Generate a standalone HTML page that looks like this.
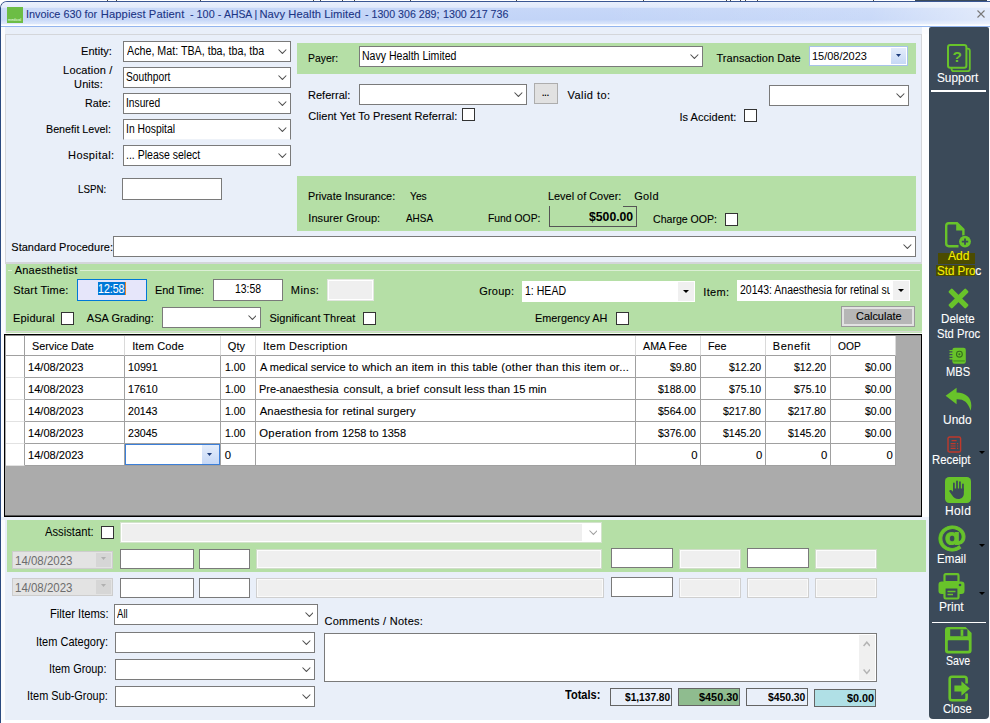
<!DOCTYPE html>
<html lang="en">
<head>
<meta charset="utf-8">
<title>Invoice 630 for Happiest Patient</title>
<style>
html,body{margin:0;padding:0}
body{width:990px;height:723px;overflow:hidden;background:#fff;font-family:"Liberation Sans",sans-serif;font-size:11px;color:#000}
#win{position:relative;width:990px;height:723px;overflow:hidden;background:#fff}
#win div,#win span.t,#win svg{position:absolute}
#win div{box-sizing:border-box}
.t{white-space:pre;transform-origin:0 50%;-webkit-text-stroke:0.1px}
.frame{background:#fbfcfe;border-left:1px solid #2a4a80;border-top:1px solid #3a5793;border-radius:7px 0 0 0}
.title{background:linear-gradient(to right,rgba(255,255,255,.12) 0,rgba(255,255,255,0) 35%,rgba(255,255,255,0) 60%,rgba(255,255,255,.12) 88%,rgba(255,255,255,.5) 100%),linear-gradient(#e8effc 0,#e1eafb 22%,#c6d7f8 26%,#c2d4f7 74%,#d3e1fa 84%,#d9e5fb 91%,#fbfdff 95%,#fff 100%);border-bottom:1px solid #93b5ee;border-radius:6px 0 0 0}
.panel{background:#e9eff9}
.pborder{border:1px solid #d4d6da;border-bottom:none}
.green{background:#b5dfa6}
.side{background:#3b4a59;border-radius:2px 2px 4px 4px}
.combo{background:#fff;border:1px solid #7a7a7a}
.cdis{background:#efefef;border:1px solid #d3e3cc;box-shadow:inset 0 0 0 1px #fff}
.flat{background:#fff}
.chk{background:#fff;border:1px solid #333}
.tb{background:#fff;border:1px solid #7a7a7a}
.tbd{background:#efefef;border:1px solid #d0dcc9;box-shadow:inset 0 0 0 1px #fcfcfc}
.tbd2{background:#efefef;border:1px solid #cfcfcf;box-shadow:inset 0 0 0 1px #fafafa}
.dd{background:#e3e3e3;border:1px solid #cdcdcd}
.dp{background:#fff;border:1px solid #a9c3ea}
.dpb{background:linear-gradient(#e4edfb,#c6d8f6)}
.btn{background:#e1e1e1;border:1px solid #adadad}
.grid{background:#ababab;border:1px solid #000}
.gh{background:#fff;border-right:1px solid #dadada;border-bottom:1px solid #a0a0a0}
.gc{background:#fff;border-right:1px solid #a0a0a0;border-bottom:1px solid #a0a0a0}
.sel{background:#0078d7}
.hl{background:#4b4b00}
.ln{background:#fff}
.tot{border:1px solid #646464;background:#f0f0f0}
.nb{border-bottom-color:#eef2f8}
.n{-webkit-text-stroke:0}

</style>
</head>
<body>
<div id="win">
<div style="left:0px;top:0px;width:990px;height:3px;background:#fff"></div>
<div style="left:107px;top:0px;width:1px;height:1px;background:#4a4a4a"></div>
<div style="left:116px;top:0px;width:1px;height:1px;background:#4a4a4a"></div>
<div style="left:200px;top:0px;width:1px;height:1px;background:#4a4a4a"></div>
<div style="left:313px;top:0px;width:1px;height:1px;background:#4a4a4a"></div>
<div style="left:320px;top:0px;width:1px;height:1px;background:#4a4a4a"></div>
<div style="left:342px;top:0px;width:1px;height:1px;background:#4a4a4a"></div>
<div style="left:354px;top:0px;width:1px;height:1px;background:#4a4a4a"></div>
<div style="left:410px;top:0px;width:1px;height:1px;background:#4a4a4a"></div>
<div style="left:516px;top:0px;width:1px;height:1px;background:#4a4a4a"></div>
<div style="left:643px;top:0px;width:1px;height:1px;background:#4a4a4a"></div>
<div style="left:726px;top:0px;width:1px;height:1px;background:#4a4a4a"></div>
<div style="left:730px;top:0px;width:1px;height:1px;background:#4a4a4a"></div>
<div style="left:740px;top:0px;width:1px;height:1px;background:#4a4a4a"></div>
<div style="left:745px;top:0px;width:1px;height:1px;background:#4a4a4a"></div>
<div style="left:757px;top:0px;width:1px;height:1px;background:#4a4a4a"></div>
<div style="left:873px;top:0px;width:1px;height:1px;background:#4a4a4a"></div>
<div style="left:915px;top:0px;width:72px;height:1px;background:#3b4a59"></div>
<div class="frame" style="left:0px;top:1px;width:990px;height:719px;"></div>
<div class="title" style="left:1px;top:2px;width:989px;height:25px;"></div>
<div style="left:7px;top:7px;width:16px;height:16px;background:#6cbd45"></div>
<span class="t" style="left:8.45px;top:16.21px;font-size:4px;line-height:8px;transform:scaleX(0.9578);color:#d8f0c8;">medical</span>
<span class="t" style="left:25.52px;top:6.92px;font-size:11.2px;line-height:15px;transform:scaleX(0.9696);color:#1b3585;">Invoice 630 for </span>
<span class="t" style="left:100.8px;top:6.92px;font-size:11.2px;line-height:15px;letter-spacing:0.09px;color:#1b3585;">Happiest Patient </span>
<span class="t" style="left:189.61px;top:6.92px;font-size:11.2px;line-height:15px;transform:scaleX(0.9662);color:#1b3585;">- 100 - </span>
<span class="t" style="left:223.7px;top:6.92px;font-size:11.2px;line-height:15px;transform:scaleX(0.9258);color:#1b3585;">AHSA | </span>
<span class="t" style="left:259.4px;top:6.92px;font-size:11.2px;line-height:15px;letter-spacing:0.07px;color:#1b3585;">Navy Health Limited </span>
<span class="t" style="left:365.22px;top:6.92px;font-size:11.2px;line-height:15px;transform:scaleX(0.9494);color:#1b3585;">- 1300 306 289; </span>
<span class="t" style="left:442.6px;top:6.92px;font-size:11.2px;line-height:15px;transform:scaleX(0.9554);color:#1b3585;">1300 217 736</span>
<svg style="left:976.5px;top:10px" width="8" height="8" viewBox="0 0 8 8"><path d="M0.5 0.5 L7.5 7.5 M7.5 0.5 L0.5 7.5" stroke="#787878" stroke-width="1.1" fill="none"/></svg>
<div style="left:5px;top:27px;width:917px;height:7px;background:#e9eff9"></div>
<div class="panel pborder" style="left:5px;top:34px;width:917px;height:229px;"></div>
<div style="left:922px;top:34px;width:7px;height:229px;background:#fdfeff"></div>
<div class="panel" style="left:5px;top:263px;width:924px;height:457px;"></div>
<div style="left:922px;top:263px;width:7px;height:254px;background:#fdfeff"></div>
<div style="left:1px;top:719.5px;width:989px;height:3.5px;background:#fff"></div>
<div style="left:0px;top:719.5px;width:1px;height:3.5px;background:#2a4a80"></div>
<span class="t" style="left:81.02px;top:43.69px;font-size:11px;line-height:15px;letter-spacing:0.05px;">Entity:</span>
<div class="combo" style="left:123px;top:41px;width:168px;height:21px;"></div>
<svg style="left:278px;top:49.3px" width="8.8" height="5.2" viewBox="0 0 8.8 5.2"><path d="M0.5 0.5 L4.4 4.5 L8.3 0.5" fill="none" stroke="#505050" stroke-width="1.05"/></svg>
<span class="t n" style="left:126.7px;top:42.84px;font-size:12px;line-height:16px;transform:scaleX(0.8918);">Ache, Mat: TBA, tba, tba, tba</span>
<span class="t" style="left:63.12px;top:62.69px;font-size:11px;line-height:15px;letter-spacing:0.16px;">Location /</span>
<span class="t" style="left:74.08px;top:76.69px;font-size:11px;line-height:15px;letter-spacing:0.11px;">Units:</span>
<div class="combo" style="left:123px;top:67px;width:168px;height:21px;"></div>
<svg style="left:278px;top:75.3px" width="8.8" height="5.2" viewBox="0 0 8.8 5.2"><path d="M0.5 0.5 L4.4 4.5 L8.3 0.5" fill="none" stroke="#505050" stroke-width="1.05"/></svg>
<span class="t n" style="left:126.24px;top:68.84px;font-size:12px;line-height:16px;transform:scaleX(0.8538);">Southport</span>
<span class="t" style="left:85.44px;top:95.69px;font-size:11px;line-height:15px;transform:scaleX(0.9787);">Rate:</span>
<div class="combo" style="left:123px;top:93px;width:168px;height:20.5px;"></div>
<svg style="left:278px;top:101.05px" width="8.8" height="5.2" viewBox="0 0 8.8 5.2"><path d="M0.5 0.5 L4.4 4.5 L8.3 0.5" fill="none" stroke="#505050" stroke-width="1.05"/></svg>
<span class="t n" style="left:126.28px;top:94.84px;font-size:12px;line-height:16px;transform:scaleX(0.8530);">Insured</span>
<span class="t" style="left:46.14px;top:121.69px;font-size:11px;line-height:15px;transform:scaleX(0.9739);">Benefit Level:</span>
<div class="combo nb" style="left:123px;top:119px;width:168px;height:20.5px;"></div>
<svg style="left:278px;top:127.05px" width="8.8" height="5.2" viewBox="0 0 8.8 5.2"><path d="M0.5 0.5 L4.4 4.5 L8.3 0.5" fill="none" stroke="#505050" stroke-width="1.05"/></svg>
<span class="t n" style="left:126.27px;top:120.84px;font-size:12px;line-height:16px;transform:scaleX(0.8643);">In Hospital</span>
<span class="t" style="left:68.02px;top:147.69px;font-size:11px;line-height:15px;letter-spacing:0.42px;">Hospital:</span>
<div class="combo" style="left:123px;top:145px;width:168px;height:21px;"></div>
<svg style="left:278px;top:153.3px" width="8.8" height="5.2" viewBox="0 0 8.8 5.2"><path d="M0.5 0.5 L4.4 4.5 L8.3 0.5" fill="none" stroke="#505050" stroke-width="1.05"/></svg>
<span class="t n" style="left:125.75px;top:146.84px;font-size:12px;line-height:16px;transform:scaleX(0.8764);">... Please select</span>
<span class="t" style="left:77.92px;top:182.29px;font-size:11px;line-height:15px;transform:scaleX(0.8857);">LSPN:</span>
<div class="tb" style="left:122px;top:178px;width:100px;height:22px;"></div>
<div class="green" style="left:297px;top:43px;width:619px;height:31px;"></div>
<span class="t" style="left:307.97px;top:50.69px;font-size:11px;line-height:15px;transform:scaleX(0.9459);">Payer:</span>
<div class="combo" style="left:359px;top:46px;width:344px;height:21px;"></div>
<svg style="left:690px;top:54.3px" width="8.8" height="5.2" viewBox="0 0 8.8 5.2"><path d="M0.5 0.5 L4.4 4.5 L8.3 0.5" fill="none" stroke="#505050" stroke-width="1.05"/></svg>
<span class="t n" style="left:361.86px;top:47.84px;font-size:12px;line-height:16px;transform:scaleX(0.8792);">Navy Health Limited</span>
<span class="t" style="left:716.48px;top:50.69px;font-size:11px;line-height:15px;letter-spacing:0.06px;">Transaction Date</span>
<div class="dp" style="left:809px;top:46px;width:99px;height:20px;"></div>
<div class="dpb" style="left:891px;top:48px;width:15px;height:16px;"></div>
<svg style="left:895.8px;top:54px" width="5" height="3" viewBox="0 0 5 3"><path d="M0 0 L5 0 L2.5 3 Z" fill="#1c3c7c"/></svg>
<span class="t n" style="left:812.28px;top:48.65px;font-size:11.4px;line-height:15px;transform:scaleX(0.9633);">15/08/2023</span>
<span class="t" style="left:307.92px;top:88.19px;font-size:11px;line-height:15px;letter-spacing:0.04px;">Referral:</span>
<div class="combo" style="left:359px;top:84px;width:168px;height:21px;"></div>
<svg style="left:514px;top:92.3px" width="8.8" height="5.2" viewBox="0 0 8.8 5.2"><path d="M0.5 0.5 L4.4 4.5 L8.3 0.5" fill="none" stroke="#505050" stroke-width="1.05"/></svg>
<div class="btn" style="left:534px;top:83px;width:24px;height:21px;"></div>
<span class="t n" style="left:542.45px;top:87.38px;font-size:9px;line-height:13px;transform:scaleX(0.9365);font-weight:bold;">...</span>
<span class="t" style="left:567.45px;top:88.19px;font-size:11px;line-height:15px;letter-spacing:0.46px;">Valid to:</span>
<div class="combo" style="left:769px;top:85px;width:140px;height:21px;"></div>
<svg style="left:896px;top:93.3px" width="8.8" height="5.2" viewBox="0 0 8.8 5.2"><path d="M0.5 0.5 L4.4 4.5 L8.3 0.5" fill="none" stroke="#505050" stroke-width="1.05"/></svg>
<span class="t" style="left:308.25px;top:109.19px;font-size:11px;line-height:15px;letter-spacing:0.06px;">Client Yet To Present Referral:</span>
<div class="chk" style="left:462px;top:108px;width:13px;height:13px;"></div>
<span class="t" style="left:679.41px;top:109.69px;font-size:11px;line-height:15px;letter-spacing:0.06px;">Is Accident:</span>
<div class="chk" style="left:744px;top:109px;width:13px;height:13px;"></div>
<div class="green" style="left:297px;top:176px;width:619px;height:55px;"></div>
<span class="t" style="left:307.94px;top:189.19px;font-size:11px;line-height:15px;transform:scaleX(0.9828);">Private Insurance:</span>
<span class="t" style="left:410.2px;top:189.19px;font-size:11px;line-height:15px;transform:scaleX(0.9293);">Yes</span>
<span class="t" style="left:547.93px;top:189.19px;font-size:11px;line-height:15px;transform:scaleX(0.9909);">Level of Cover:</span>
<span class="t" style="left:634.15px;top:189.19px;font-size:11px;line-height:15px;letter-spacing:0.4px;">Gold</span>
<span class="t" style="left:308.31px;top:211.19px;font-size:11px;line-height:15px;letter-spacing:0.07px;">Insurer Group:</span>
<span class="t" style="left:405.8px;top:211.19px;font-size:11px;line-height:15px;transform:scaleX(0.9024);">AHSA</span>
<span class="t" style="left:487.87px;top:211.19px;font-size:11px;line-height:15px;transform:scaleX(0.9426);">Fund OOP:</span>
<div style="left:549px;top:205.5px;width:88px;height:21px;border:1px solid #555;border-top:none"></div>
<div style="left:622.5px;top:205.5px;width:14.5px;height:1px;background:#555"></div>
<span class="t n" style="left:589.42px;top:208px;font-size:13px;line-height:17px;transform:scaleX(0.9399);font-weight:bold;">$500.00</span>
<span class="t" style="left:653.07px;top:211.69px;font-size:11px;line-height:15px;transform:scaleX(0.9613);">Charge OOP:</span>
<div class="chk" style="left:725px;top:212.5px;width:13px;height:13px;"></div>
<span class="t" style="left:11.31px;top:239.69px;font-size:11px;line-height:15px;letter-spacing:0.01px;">Standard Procedure:</span>
<div class="combo" style="left:113px;top:236px;width:803px;height:21px;"></div>
<svg style="left:903px;top:244.3px" width="8.8" height="5.2" viewBox="0 0 8.8 5.2"><path d="M0.5 0.5 L4.4 4.5 L8.3 0.5" fill="none" stroke="#505050" stroke-width="1.05"/></svg>
<div style="left:5px;top:262px;width:917px;height:1.5px;background:#d4d6da"></div>
<div class="green" style="left:6px;top:263.5px;width:916px;height:67.5px;"></div>
<div style="left:6px;top:330.8px;width:916px;height:1.2px;background:#d6d9d4"></div>
<div style="left:6px;top:332px;width:916px;height:1px;background:#c4e4b8"></div>
<div style="left:5px;top:333px;width:917px;height:1px;background:#fafcf8"></div>
<div style="left:8px;top:270px;width:912px;height:1px;background:#dcefd5"></div>
<div class="green" style="left:12px;top:266px;width:68px;height:10px;"></div>
<span class="t" style="left:14.8px;top:263.19px;font-size:11px;line-height:15px;letter-spacing:0.17px;">Anaesthetist</span>
<span class="t" style="left:13.31px;top:283.19px;font-size:11px;line-height:15px;letter-spacing:0.18px;">Start Time:</span>
<div style="left:77px;top:279px;width:70px;height:22px;background:#e6e6fa;border:1px solid #0078d7"></div>
<div class="sel" style="left:98px;top:282px;width:27px;height:13px;"></div>
<div style="left:125px;top:282px;width:1px;height:13px;background:#e8862a"></div>
<span class="t" style="left:98.41px;top:281.14px;font-size:12px;line-height:16px;transform:scaleX(0.8805);color:#fff;">12:58</span>
<span class="t" style="left:155.43px;top:283.19px;font-size:11px;line-height:15px;transform:scaleX(0.9919);">End Time:</span>
<div class="tb" style="left:213px;top:279px;width:70px;height:22px;"></div>
<span class="t n" style="left:234.62px;top:281.14px;font-size:12px;line-height:16px;transform:scaleX(0.8700);">13:58</span>
<span class="t" style="left:290.82px;top:283.19px;font-size:11px;line-height:15px;letter-spacing:0.45px;">Mins:</span>
<div style="left:327px;top:279px;width:47px;height:22px;background:#efefef;border:1px solid #e2e6e0;box-shadow:inset 0 0 0 1px #fff"></div>
<span class="t" style="left:479.15px;top:284.19px;font-size:11px;line-height:15px;letter-spacing:0.24px;">Group:</span>
<div class="flat" style="left:521.8px;top:281px;width:173px;height:21px;"></div>
<div style="left:678px;top:282px;width:16px;height:19px;background:#f0f0f0"></div>
<span class="t n" style="left:525.21px;top:282.84px;font-size:12px;line-height:16px;transform:scaleX(0.8798);">1: HEAD</span>
<svg style="left:683.2px;top:290px" width="6" height="3" viewBox="0 0 6 3"><path d="M0 0 L6 0 L3 3 Z" fill="#000"/></svg>
<span class="t" style="left:703.31px;top:284.69px;font-size:11px;line-height:15px;letter-spacing:0.3px;">Item:</span>
<div class="flat" style="left:736.7px;top:280px;width:173.3px;height:21px;"></div>
<div style="left:893px;top:281px;width:16px;height:19px;background:#f0f0f0"></div>
<span class="t n" style="left:740.18px;top:281.84px;font-size:12px;line-height:16px;transform:scaleX(0.8725);">20143: Anaesthesia for retinal su</span>
<div style="left:890px;top:281px;width:3px;height:19px;background:#fff"></div>
<svg style="left:898.1px;top:289px" width="6" height="3" viewBox="0 0 6 3"><path d="M0 0 L6 0 L3 3 Z" fill="#000"/></svg>
<span class="t" style="left:12.92px;top:311.19px;font-size:11px;line-height:15px;letter-spacing:0.2px;">Epidural</span>
<div class="chk" style="left:61px;top:312px;width:13px;height:13px;"></div>
<span class="t" style="left:86.8px;top:311.19px;font-size:11px;line-height:15px;letter-spacing:0.03px;">ASA Grading:</span>
<div class="combo" style="left:162px;top:307px;width:98.7px;height:21px;"></div>
<svg style="left:247.7px;top:315.3px" width="8.8" height="5.2" viewBox="0 0 8.8 5.2"><path d="M0.5 0.5 L4.4 4.5 L8.3 0.5" fill="none" stroke="#505050" stroke-width="1.05"/></svg>
<span class="t" style="left:269.4px;top:311.19px;font-size:11px;line-height:15px;letter-spacing:0.03px;">Significant Threat</span>
<div class="chk" style="left:363px;top:312px;width:13px;height:13px;"></div>
<span class="t" style="left:535.23px;top:311.19px;font-size:11px;line-height:15px;transform:scaleX(0.9859);">Emergency AH</span>
<div class="chk" style="left:616.2px;top:312px;width:13px;height:13px;"></div>
<div style="left:841px;top:306px;width:73.7px;height:21px;background:#e2e2e2;border:1px solid #9a9a9a"></div>
<div style="left:844px;top:308.6px;width:67.7px;height:15.6px;background:#b6b6b6"></div>
<span class="t" style="left:856.05px;top:308.69px;font-size:11px;line-height:15px;transform:scaleX(0.9938);">Calculate</span>
<div class="grid" style="left:4px;top:334px;width:918px;height:183px;border-width:1px 1px 1px 1px"></div>
<div style="left:5px;top:335px;width:916px;height:1px;background:#8a8a8a"></div>
<div style="left:5px;top:515px;width:916px;height:1px;background:#555"></div>
<div class="gh" style="left:6px;top:336px;width:18.5px;height:20px;border-right-color:#a0a0a0"></div>
<div class="gh" style="left:24.5px;top:336px;width:100px;height:20px;"></div>
<span class="t" style="left:32.21px;top:338.59px;font-size:11px;line-height:15px;transform:scaleX(0.9816);">Service Date</span>
<div class="gh" style="left:124.5px;top:336px;width:96px;height:20px;"></div>
<span class="t" style="left:132.21px;top:338.59px;font-size:11px;line-height:15px;letter-spacing:0.11px;">Item Code</span>
<div class="gh" style="left:220.5px;top:336px;width:35px;height:20px;"></div>
<span class="t" style="left:227.71px;top:338.59px;font-size:11px;line-height:15px;letter-spacing:0.14px;">Qty</span>
<div class="gh" style="left:255.5px;top:336px;width:380px;height:20px;"></div>
<span class="t" style="left:262.91px;top:338.59px;font-size:11px;line-height:15px;letter-spacing:0.33px;">Item Description</span>
<div class="gh" style="left:635.5px;top:336px;width:65px;height:20px;"></div>
<span class="t" style="left:643.4px;top:338.59px;font-size:11px;line-height:15px;transform:scaleX(0.9716);">AMA Fee</span>
<div class="gh" style="left:700.5px;top:336px;width:65px;height:20px;"></div>
<span class="t" style="left:707.54px;top:338.59px;font-size:11px;line-height:15px;transform:scaleX(0.9773);">Fee</span>
<div class="gh" style="left:765.5px;top:336px;width:65px;height:20px;"></div>
<span class="t" style="left:772.82px;top:338.59px;font-size:11px;line-height:15px;letter-spacing:0.52px;">Benefit</span>
<div class="gh" style="left:830.5px;top:336px;width:65px;height:20px;"></div>
<span class="t" style="left:838.44px;top:338.59px;font-size:11px;line-height:15px;transform:scaleX(0.9283);">OOP</span>
<div class="gc" style="left:6px;top:356px;width:18.5px;height:22px;border-bottom-color:#e2e2e2"></div>
<div class="gc" style="left:24.5px;top:356px;width:100px;height:22px;"></div>
<div class="gc" style="left:124.5px;top:356px;width:96px;height:22px;"></div>
<div class="gc" style="left:220.5px;top:356px;width:35px;height:22px;"></div>
<div class="gc" style="left:255.5px;top:356px;width:380px;height:22px;"></div>
<div class="gc" style="left:635.5px;top:356px;width:65px;height:22px;"></div>
<div class="gc" style="left:700.5px;top:356px;width:65px;height:22px;"></div>
<div class="gc" style="left:765.5px;top:356px;width:65px;height:22px;"></div>
<div class="gc" style="left:830.5px;top:356px;width:65px;height:22px;"></div>
<span class="t" style="left:28.37px;top:359.58px;font-size:11.3px;line-height:15px;transform:scaleX(0.9809);">14/08/2023</span>
<span class="t" style="left:127.9px;top:359.58px;font-size:11.3px;line-height:15px;transform:scaleX(0.9482);">10991</span>
<span class="t" style="left:224.51px;top:359.58px;font-size:11.3px;line-height:15px;transform:scaleX(0.9308);">1.00</span>
<span class="t" style="left:259.8px;top:359.58px;font-size:11.3px;line-height:15px;transform:scaleX(0.9730);">A medical service </span>
<span class="t" style="left:348.73px;top:359.58px;font-size:11.3px;line-height:15px;letter-spacing:0.22px;">to which an item in </span>
<span class="t" style="left:450.73px;top:359.58px;font-size:11.3px;line-height:15px;letter-spacing:0.19px;">this table </span>
<span class="t" style="left:501.32px;top:359.58px;font-size:11.3px;line-height:15px;letter-spacing:0.25px;">(other than this </span>
<span class="t" style="left:584.07px;top:359.58px;font-size:11.3px;line-height:15px;letter-spacing:0.17px;">item or...</span>
<span class="t" style="left:669.99px;top:359.58px;font-size:11.3px;line-height:15px;transform:scaleX(0.9300);">$9.80</span>
<span class="t" style="left:728.85px;top:359.58px;font-size:11.3px;line-height:15px;transform:scaleX(0.9290);">$12.20</span>
<span class="t" style="left:793.85px;top:359.58px;font-size:11.3px;line-height:15px;transform:scaleX(0.9290);">$12.20</span>
<span class="t" style="left:865.19px;top:359.58px;font-size:11.3px;line-height:15px;transform:scaleX(0.9300);">$0.00</span>
<div class="gc" style="left:6px;top:378px;width:18.5px;height:22px;border-bottom-color:#e2e2e2"></div>
<div class="gc" style="left:24.5px;top:378px;width:100px;height:22px;"></div>
<div class="gc" style="left:124.5px;top:378px;width:96px;height:22px;"></div>
<div class="gc" style="left:220.5px;top:378px;width:35px;height:22px;"></div>
<div class="gc" style="left:255.5px;top:378px;width:380px;height:22px;"></div>
<div class="gc" style="left:635.5px;top:378px;width:65px;height:22px;"></div>
<div class="gc" style="left:700.5px;top:378px;width:65px;height:22px;"></div>
<div class="gc" style="left:765.5px;top:378px;width:65px;height:22px;"></div>
<div class="gc" style="left:830.5px;top:378px;width:65px;height:22px;"></div>
<span class="t" style="left:28.37px;top:381.58px;font-size:11.3px;line-height:15px;transform:scaleX(0.9809);">14/08/2023</span>
<span class="t" style="left:127.9px;top:381.58px;font-size:11.3px;line-height:15px;transform:scaleX(0.9446);">17610</span>
<span class="t" style="left:224.51px;top:381.58px;font-size:11.3px;line-height:15px;transform:scaleX(0.9308);">1.00</span>
<span class="t" style="left:258.93px;top:381.58px;font-size:11.3px;line-height:15px;transform:scaleX(0.9661);">Pre-anaesthesia </span>
<span class="t" style="left:343.45px;top:381.58px;font-size:11.3px;line-height:15px;letter-spacing:0.15px;">consult, a brief </span>
<span class="t" style="left:423.65px;top:381.58px;font-size:11.3px;line-height:15px;letter-spacing:0.24px;">consult </span>
<span class="t" style="left:464.27px;top:381.58px;font-size:11.3px;line-height:15px;letter-spacing:0.07px;">less than </span>
<span class="t" style="left:513.26px;top:381.58px;font-size:11.3px;line-height:15px;transform:scaleX(0.9902);">15 min</span>
<span class="t" style="left:658.29px;top:381.58px;font-size:11.3px;line-height:15px;transform:scaleX(0.9296);">$188.00</span>
<span class="t" style="left:728.85px;top:381.58px;font-size:11.3px;line-height:15px;transform:scaleX(0.9290);">$75.10</span>
<span class="t" style="left:793.85px;top:381.58px;font-size:11.3px;line-height:15px;transform:scaleX(0.9290);">$75.10</span>
<span class="t" style="left:865.19px;top:381.58px;font-size:11.3px;line-height:15px;transform:scaleX(0.9300);">$0.00</span>
<div class="gc" style="left:6px;top:400px;width:18.5px;height:22px;border-bottom-color:#e2e2e2"></div>
<div class="gc" style="left:24.5px;top:400px;width:100px;height:22px;"></div>
<div class="gc" style="left:124.5px;top:400px;width:96px;height:22px;"></div>
<div class="gc" style="left:220.5px;top:400px;width:35px;height:22px;"></div>
<div class="gc" style="left:255.5px;top:400px;width:380px;height:22px;"></div>
<div class="gc" style="left:635.5px;top:400px;width:65px;height:22px;"></div>
<div class="gc" style="left:700.5px;top:400px;width:65px;height:22px;"></div>
<div class="gc" style="left:765.5px;top:400px;width:65px;height:22px;"></div>
<div class="gc" style="left:830.5px;top:400px;width:65px;height:22px;"></div>
<span class="t" style="left:28.37px;top:403.58px;font-size:11.3px;line-height:15px;transform:scaleX(0.9809);">14/08/2023</span>
<span class="t" style="left:128.17px;top:403.58px;font-size:11.3px;line-height:15px;transform:scaleX(0.9376);">20143</span>
<span class="t" style="left:224.51px;top:403.58px;font-size:11.3px;line-height:15px;transform:scaleX(0.9308);">1.00</span>
<span class="t" style="left:259.8px;top:403.58px;font-size:11.3px;line-height:15px;letter-spacing:0.02px;">Anaesthesia for </span>
<span class="t" style="left:342.57px;top:403.58px;font-size:11.3px;line-height:15px;letter-spacing:0.1px;">retinal surgery</span>
<span class="t" style="left:658.29px;top:403.58px;font-size:11.3px;line-height:15px;transform:scaleX(0.9296);">$564.00</span>
<span class="t" style="left:722.99px;top:403.58px;font-size:11.3px;line-height:15px;transform:scaleX(0.9296);">$217.80</span>
<span class="t" style="left:787.99px;top:403.58px;font-size:11.3px;line-height:15px;transform:scaleX(0.9296);">$217.80</span>
<span class="t" style="left:865.19px;top:403.58px;font-size:11.3px;line-height:15px;transform:scaleX(0.9300);">$0.00</span>
<div class="gc" style="left:6px;top:422px;width:18.5px;height:22px;border-bottom-color:#e2e2e2"></div>
<div class="gc" style="left:24.5px;top:422px;width:100px;height:22px;"></div>
<div class="gc" style="left:124.5px;top:422px;width:96px;height:22px;"></div>
<div class="gc" style="left:220.5px;top:422px;width:35px;height:22px;"></div>
<div class="gc" style="left:255.5px;top:422px;width:380px;height:22px;"></div>
<div class="gc" style="left:635.5px;top:422px;width:65px;height:22px;"></div>
<div class="gc" style="left:700.5px;top:422px;width:65px;height:22px;"></div>
<div class="gc" style="left:765.5px;top:422px;width:65px;height:22px;"></div>
<div class="gc" style="left:830.5px;top:422px;width:65px;height:22px;"></div>
<span class="t" style="left:28.37px;top:425.58px;font-size:11.3px;line-height:15px;transform:scaleX(0.9809);">14/08/2023</span>
<span class="t" style="left:128.17px;top:425.58px;font-size:11.3px;line-height:15px;transform:scaleX(0.9376);">23045</span>
<span class="t" style="left:224.51px;top:425.58px;font-size:11.3px;line-height:15px;transform:scaleX(0.9308);">1.00</span>
<span class="t" style="left:259.29px;top:425.58px;font-size:11.3px;line-height:15px;letter-spacing:0.3px;">Operation from </span>
<span class="t" style="left:342.48px;top:425.58px;font-size:11.3px;line-height:15px;transform:scaleX(0.9707);">1258 to 1358</span>
<span class="t" style="left:658.29px;top:425.58px;font-size:11.3px;line-height:15px;transform:scaleX(0.9296);">$376.00</span>
<span class="t" style="left:722.99px;top:425.58px;font-size:11.3px;line-height:15px;transform:scaleX(0.9296);">$145.20</span>
<span class="t" style="left:787.99px;top:425.58px;font-size:11.3px;line-height:15px;transform:scaleX(0.9296);">$145.20</span>
<span class="t" style="left:865.19px;top:425.58px;font-size:11.3px;line-height:15px;transform:scaleX(0.9300);">$0.00</span>
<div class="gc" style="left:6px;top:444px;width:18.5px;height:22px;border-bottom-color:#e2e2e2"></div>
<div class="gc" style="left:24.5px;top:444px;width:100px;height:22px;"></div>
<div class="gc" style="left:124.5px;top:444px;width:96px;height:22px;"></div>
<div class="gc" style="left:220.5px;top:444px;width:35px;height:22px;"></div>
<div class="gc" style="left:255.5px;top:444px;width:380px;height:22px;"></div>
<div class="gc" style="left:635.5px;top:444px;width:65px;height:22px;"></div>
<div class="gc" style="left:700.5px;top:444px;width:65px;height:22px;"></div>
<div class="gc" style="left:765.5px;top:444px;width:65px;height:22px;"></div>
<div class="gc" style="left:830.5px;top:444px;width:65px;height:22px;"></div>
<span class="t" style="left:28.37px;top:447.58px;font-size:11.3px;line-height:15px;transform:scaleX(0.9809);">14/08/2023</span>
<span class="t" style="left:224.85px;top:447.58px;font-size:11.3px;line-height:15px;">0</span>
<span class="t" style="left:691.2px;top:447.58px;font-size:11.3px;line-height:15px;">0</span>
<span class="t" style="left:755.9px;top:447.58px;font-size:11.3px;line-height:15px;">0</span>
<span class="t" style="left:820.9px;top:447.58px;font-size:11.3px;line-height:15px;">0</span>
<span class="t" style="left:886.4px;top:447.58px;font-size:11.3px;line-height:15px;">0</span>
<div style="left:124.5px;top:444px;width:95.5px;height:21px;background:#fff;border:1px solid #3c7fd8"></div>
<div class="dpb" style="left:202px;top:445px;width:17px;height:19px;"></div>
<svg style="left:207px;top:452.5px" width="5" height="3" viewBox="0 0 5 3"><path d="M0 0 L5 0 L2.5 3 Z" fill="#1c3c7c"/></svg>
<div style="left:1px;top:517px;width:928px;height:3px;background:#ecf1fa"></div>
<div class="green" style="left:6.8px;top:520.2px;width:919.2px;height:51.5px;"></div>
<span class="t n" style="left:45.4px;top:524.34px;font-size:12px;line-height:16px;transform:scaleX(0.9344);">Assistant:</span>
<div class="chk" style="left:101px;top:526.2px;width:13px;height:13px;"></div>
<div class="cdis" style="left:120px;top:522px;width:482px;height:21px;"></div>
<div style="left:582px;top:523px;width:19px;height:19px;background:#fff"></div>
<svg style="left:588.7px;top:530.4px" width="8.8" height="5.2" viewBox="0 0 8.8 5.2"><path d="M0.5 0.5 L4.4 4.5 L8.3 0.5" fill="none" stroke="#a0a0a0" stroke-width="1.05"/></svg>
<div class="dd" style="left:12px;top:551px;width:100.6px;height:18px;"></div>
<span class="t n" style="left:15.24px;top:553.24px;font-size:12.3px;line-height:16px;transform:scaleX(0.9344);color:#6d6d6d;">14/08/2023</span>
<div style="left:96px;top:553px;width:15px;height:14px;background:#d6d6d6"></div>
<svg style="left:100.8px;top:557.3px" width="5" height="3" viewBox="0 0 5 3"><path d="M0 0 L5 0 L2.5 3 Z" fill="#b0b0b0"/></svg>
<div class="tb" style="left:120px;top:549.2px;width:74.2px;height:19.4px;"></div>
<div class="tb" style="left:199px;top:549.2px;width:51.2px;height:19.4px;"></div>
<div class="tbd" style="left:256px;top:549px;width:346px;height:20px;"></div>
<div class="tb" style="left:611px;top:548.2px;width:62.2px;height:19.7px;"></div>
<div class="tbd" style="left:679px;top:549px;width:62px;height:20px;"></div>
<div class="tb" style="left:747.3px;top:548.2px;width:61.7px;height:19.7px;"></div>
<div class="tbd" style="left:815px;top:549px;width:62px;height:20px;"></div>
<div class="dd" style="left:12px;top:578px;width:100.6px;height:18px;"></div>
<span class="t n" style="left:15.24px;top:580.24px;font-size:12.3px;line-height:16px;transform:scaleX(0.9344);color:#6d6d6d;">14/08/2023</span>
<div style="left:96px;top:580px;width:15px;height:14px;background:#d6d6d6"></div>
<svg style="left:100.8px;top:584.3px" width="5" height="3" viewBox="0 0 5 3"><path d="M0 0 L5 0 L2.5 3 Z" fill="#b0b0b0"/></svg>
<div class="tb" style="left:120px;top:578.2px;width:74.2px;height:19.5px;"></div>
<div class="tb" style="left:199px;top:578.2px;width:51.2px;height:19.5px;"></div>
<div class="tbd2" style="left:256px;top:578px;width:348px;height:20px;"></div>
<div class="tb" style="left:611px;top:577.2px;width:62.2px;height:19.8px;"></div>
<div class="tbd2" style="left:679px;top:578px;width:62px;height:20px;"></div>
<div class="tbd2" style="left:747.3px;top:578px;width:61.7px;height:20px;"></div>
<div class="tbd2" style="left:815px;top:578px;width:62px;height:20px;"></div>
<span class="t n" style="left:50px;top:605.7px;font-size:12.4px;line-height:16px;transform:scaleX(0.9046);">Filter Items:</span>
<div class="combo" style="left:114.2px;top:604.3px;width:203.4px;height:20.3px;"></div>
<svg style="left:304.6px;top:612.25px" width="8.8" height="5.2" viewBox="0 0 8.8 5.2"><path d="M0.5 0.5 L4.4 4.5 L8.3 0.5" fill="none" stroke="#505050" stroke-width="1.05"/></svg>
<span class="t n" style="left:116.9px;top:606.14px;font-size:12px;line-height:16px;transform:scaleX(0.7974);">All</span>
<span class="t n" style="left:35.71px;top:633.7px;font-size:12.4px;line-height:16px;transform:scaleX(0.8873);">Item Category:</span>
<div class="combo" style="left:115.2px;top:632px;width:199.6px;height:20.5px;"></div>
<svg style="left:301.8px;top:640.05px" width="8.8" height="5.2" viewBox="0 0 8.8 5.2"><path d="M0.5 0.5 L4.4 4.5 L8.3 0.5" fill="none" stroke="#505050" stroke-width="1.05"/></svg>
<span class="t n" style="left:49.12px;top:660.7px;font-size:12.4px;line-height:16px;transform:scaleX(0.8776);">Item Group:</span>
<div class="combo" style="left:115.2px;top:659.3px;width:199.6px;height:20.3px;"></div>
<svg style="left:301.8px;top:667.25px" width="8.8" height="5.2" viewBox="0 0 8.8 5.2"><path d="M0.5 0.5 L4.4 4.5 L8.3 0.5" fill="none" stroke="#505050" stroke-width="1.05"/></svg>
<span class="t n" style="left:27.02px;top:687.9px;font-size:12.4px;line-height:16px;transform:scaleX(0.8819);">Item Sub-Group:</span>
<div class="combo" style="left:115.2px;top:686.2px;width:199.6px;height:20.5px;"></div>
<svg style="left:301.8px;top:694.25px" width="8.8" height="5.2" viewBox="0 0 8.8 5.2"><path d="M0.5 0.5 L4.4 4.5 L8.3 0.5" fill="none" stroke="#505050" stroke-width="1.05"/></svg>
<span class="t" style="left:324.45px;top:614.19px;font-size:11px;line-height:15px;letter-spacing:0.27px;">Comments / Notes:</span>
<div class="tb" style="left:324px;top:633px;width:553px;height:49px;"></div>
<div style="left:859px;top:635px;width:16px;height:45px;background:#f0f0f0"></div>
<svg style="left:862.6px;top:641.2px" width="7.6" height="5.6" viewBox="0 0 7.6 5.6"><path d="M0.6 5 L3.8 1.2 L7 5" fill="none" stroke="#b4b4b4" stroke-width="1.5"/></svg>
<svg style="left:862.6px;top:669px" width="7.6" height="5.6" viewBox="0 0 7.6 5.6"><path d="M0.6 0.6 L3.8 4.4 L7 0.6" fill="none" stroke="#b4b4b4" stroke-width="1.5"/></svg>
<span class="t n" style="left:564.69px;top:687.33px;font-size:12.6px;line-height:17px;transform:scaleX(0.8756);font-weight:bold;">Totals:</span>
<div class="tot" style="left:610.3px;top:688px;width:62px;height:18px;background:#e9eff9"></div>
<span class="t n" style="left:624.55px;top:689.99px;font-size:11px;line-height:15px;transform:scaleX(0.9225);font-weight:bold;">$1,137.80</span>
<div class="tot" style="left:678.3px;top:688px;width:62.2px;height:18px;background:#8fbc8f"></div>
<span class="t n" style="left:699.04px;top:689.99px;font-size:11px;line-height:15px;transform:scaleX(0.9883);font-weight:bold;">$450.30</span>
<div class="tot" style="left:746px;top:688px;width:62.3px;height:18px;background:#e9eff9"></div>
<span class="t n" style="left:768.34px;top:689.99px;font-size:11px;line-height:15px;transform:scaleX(0.9397);font-weight:bold;">$450.30</span>
<div class="tot" style="left:813.8px;top:689px;width:62.4px;height:18px;background:#b0e0e6"></div>
<span class="t n" style="left:846.94px;top:690.89px;font-size:11px;line-height:15px;transform:scaleX(0.9853);font-weight:bold;">$0.00</span>
<div class="side" style="left:929px;top:27px;width:60px;height:692px;"></div>
<svg style="left:945.6px;top:42.6px" width="26" height="30" viewBox="0 0 26 30"><rect x="5.6" y="5.6" width="18.2" height="22.6" rx="2.2" fill="none" stroke="#68c32a" stroke-width="1.8"/><rect x="2" y="2" width="18.4" height="22.8" rx="2.2" fill="#3b4a59" stroke="#68c32a" stroke-width="2"/><text x="11.2" y="19" font-family="Liberation Sans, sans-serif" font-size="15.5" font-weight="bold" fill="#68c32a" text-anchor="middle">?</text></svg>
<span class="t" style="left:937.37px;top:69.84px;font-size:12px;line-height:16px;transform:scaleX(0.9831);color:#fff;">Support</span>
<div class="ln" style="left:931px;top:90.2px;width:55.2px;height:2px;"></div>
<svg style="left:944px;top:221px" width="28" height="28" viewBox="0 0 28 28"><path d="M14.5 25.2 H4.8 Q2.2 25.2 2.2 22.6 V4.8 Q2.2 2.2 4.8 2.2 H13 L19.4 8.6 V15" fill="none" stroke="#68c32a" stroke-width="2.4"/><path d="M12.2 2 L19.8 9.4 H12.2 Z" fill="#68c32a"/><circle cx="21" cy="20.6" r="6.7" fill="#3b4a59"/><circle cx="21" cy="20.6" r="5.9" fill="#68c32a"/><path d="M21 17.4 V23.8 M17.8 20.6 H24.2" stroke="#3b4a59" stroke-width="1.8"/></svg>
<div class="hl" style="left:938.4px;top:253px;width:36.6px;height:11px;"></div>
<div class="hl" style="left:936px;top:265px;width:39px;height:11px;"></div>
<span class="t" style="left:947.9px;top:248.14px;font-size:12px;line-height:16px;letter-spacing:0.03px;color:#f6f000;">Add</span>
<span class="t" style="left:936.58px;top:262.84px;font-size:12px;line-height:16px;transform:scaleX(0.9615);color:#f6f000;">Std Pro</span>
<span class="t" style="left:975.22px;top:262.84px;font-size:12px;line-height:16px;color:#fff;">c</span>
<svg style="left:947.5px;top:287.5px" width="21" height="21" viewBox="0 0 21 21"><g transform="rotate(45 10.5 10.5)" fill="#68c32a"><rect x="-1.6" y="7.9" width="24.2" height="5.2" rx="1.2"/><rect x="7.9" y="-1.6" width="5.2" height="24.2" rx="1.2"/></g></svg>
<span class="t" style="left:940.97px;top:311.14px;font-size:12px;line-height:16px;transform:scaleX(0.9687);color:#fff;">Delete</span>
<span class="t" style="left:937.4px;top:325.84px;font-size:12px;line-height:16px;transform:scaleX(0.9340);color:#fff;">Std Proc</span>
<svg style="left:949px;top:347px" width="18" height="18" viewBox="0 0 18 18"><rect x="3.4" y="0.8" width="13.4" height="16" rx="2.2" fill="#68c32a"/><rect x="4.4" y="13.4" width="11.4" height="1.1" fill="#3f8f1c"/><circle cx="10.4" cy="7.2" r="2.9" fill="none" stroke="#356f1c" stroke-width="1.1"/><circle cx="10.4" cy="7.2" r="1" fill="#356f1c"/><path d="M1 3.6 H4.6 M1 6.3 H4.6 M1 9 H4.6 M1 11.7 H4.6" stroke="#68c32a" stroke-width="1.4" stroke-linecap="round"/></svg>
<span class="t" style="left:946.01px;top:363.84px;font-size:12px;line-height:16px;transform:scaleX(0.9273);color:#fff;">MBS</span>
<svg style="left:944.5px;top:387px" width="28" height="25" viewBox="0 0 28 25"><path d="M11.6 0.8 L0.6 8.8 L11.6 17.2 V12.3 C18.5 12 23 15 25.6 23.8 C28.4 13 23 6 11.6 5.6 Z" fill="#68c32a"/></svg>
<span class="t" style="left:943px;top:412.14px;font-size:12px;line-height:16px;transform:scaleX(0.9963);color:#fff;">Undo</span>
<svg style="left:947px;top:435.5px" width="15" height="17" viewBox="0 0 15 17"><rect x="1" y="1" width="12.6" height="15" rx="1.6" fill="none" stroke="#c0392b" stroke-width="1.4"/><path d="M4.6 4.6 H9.6 M3.6 7.6 H8.6 M3.6 10 H8.6 M3.6 12.4 H8.6 M10 7.6 H11.2 M10 10 H11.2 M10 12.4 H11.2" stroke="#c0392b" stroke-width="1.1"/></svg>
<span class="t" style="left:932.19px;top:452.14px;font-size:12px;line-height:16px;transform:scaleX(0.9455);color:#fff;">Receipt</span>
<svg style="left:979.3px;top:450.8px" width="6" height="3" viewBox="0 0 6 3"><path d="M0 0 L6 0 L3 3 Z" fill="#000"/></svg>
<svg style="left:945px;top:477px" width="26" height="26" viewBox="0 0 26 26"><rect x="0" y="0" width="26" height="26" rx="4.2" fill="#68c32a"/><path d="M8.9 13 V6.3 M12 13 V4.3 M14.95 13 V5 M17.95 13 V7.3" stroke="#3b4a59" stroke-width="1.75" stroke-linecap="round" fill="none"/><path d="M8 11.6 H18.85 V16.6 C18.85 20 16.5 22.1 13.3 22.1 C10.3 22.1 8.8 20.9 7.3 18.6 L4.1 14.1 C4.7 12.7 6.2 12.6 7.1 13.8 L8 14.8 Z" fill="#3b4a59"/></svg>
<span class="t" style="left:944.94px;top:502.84px;font-size:12px;line-height:16px;letter-spacing:0.41px;color:#fff;">Hold</span>
<span class="t" style="left:936.8px;top:517.8px;font-family:'DejaVu Sans','Liberation Sans',sans-serif;font-weight:bold;font-size:28.8px;line-height:36px;color:#68c32a;-webkit-text-stroke:0.9px #68c32a;transform:scaleX(1.04)">@</span>
<span class="t" style="left:937.07px;top:551.14px;font-size:12px;line-height:16px;transform:scaleX(0.9660);color:#fff;">Email</span>
<svg style="left:979.3px;top:543.7px" width="6" height="3" viewBox="0 0 6 3"><path d="M0 0 L6 0 L3 3 Z" fill="#000"/></svg>
<svg style="left:938.3px;top:573px" width="27" height="27" viewBox="0 0 27 27"><rect x="6.5" y="1.2" width="14" height="8" rx="1.2" fill="none" stroke="#68c32a" stroke-width="2.2"/><rect x="0.5" y="8.5" width="26" height="12.5" rx="3.2" fill="#68c32a"/><circle cx="22" cy="12" r="1.3" fill="#3b4a59"/><rect x="6.5" y="14.5" width="14" height="11" rx="1.2" fill="#3b4a59" stroke="#68c32a" stroke-width="2.2"/><path d="M9.5 18.5 H17.5 M9.5 21.5 H15" stroke="#68c32a" stroke-width="1.6"/></svg>
<span class="t" style="left:938.94px;top:599.14px;font-size:12px;line-height:16px;letter-spacing:0.02px;color:#fff;">Print</span>
<svg style="left:979.3px;top:592.1px" width="6" height="3" viewBox="0 0 6 3"><path d="M0 0 L6 0 L3 3 Z" fill="#000"/></svg>
<div class="ln" style="left:931.5px;top:621.5px;width:54.5px;height:1.5px;"></div>
<svg style="left:944.6px;top:626.8px" width="27" height="27" viewBox="0 0 27 27"><path d="M3 0 H20.6 L26.6 6 V23.4 Q26.6 26.4 23.6 26.4 H3 Q0 26.4 0 23.4 V3 Q0 0 3 0 Z" fill="#68c32a"/><rect x="5.2" y="2.3" width="17.2" height="6.9" fill="#3b4a59"/><rect x="15.6" y="2.6" width="2.7" height="6.3" fill="#68c32a"/><rect x="2.8" y="13.2" width="21" height="10.5" rx="0.8" fill="#3b4a59"/></svg>
<span class="t" style="left:945.92px;top:652.84px;font-size:12px;line-height:16px;transform:scaleX(0.8808);color:#fff;">Save</span>
<svg style="left:947.5px;top:674.5px" width="23" height="27" viewBox="0 0 23 27"><path d="M18.6 8.4 V3.9 Q18.6 1.7 16.4 1.7 H3.9 Q1.7 1.7 1.7 3.9 V23.1 Q1.7 25.3 3.9 25.3 H16.4 Q18.6 25.3 18.6 23.1 V18.6" fill="none" stroke="#68c32a" stroke-width="2.6"/><path d="M6.4 10.4 H13.4 V6.2 L21.8 13.5 L13.4 20.8 V16.6 H6.4 Z" fill="#68c32a"/></svg>
<span class="t" style="left:943.34px;top:700.84px;font-size:12px;line-height:16px;transform:scaleX(0.9364);color:#fff;">Close</span>
</div>
</body>
</html>
